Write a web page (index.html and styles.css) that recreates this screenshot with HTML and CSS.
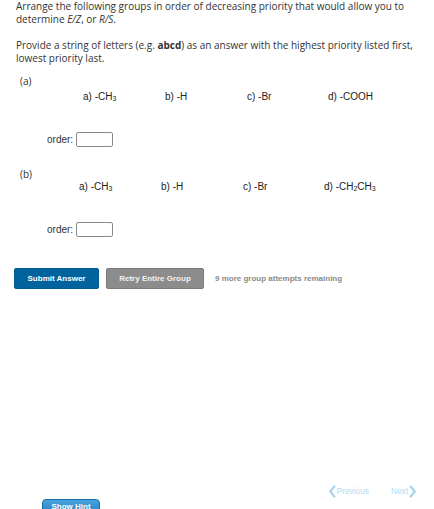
FILE: index.html
```html
<!DOCTYPE html>
<html>
<head>
<meta charset="utf-8">
<link rel="stylesheet" href="styles.css">
</head>
<body>
<div class="page">
  <p class="intro">Arrange the following groups in order of decreasing priority that would allow you to determine <i>E/Z</i>, or <i>R/S</i>.</p>
  <p class="intro second">Provide a string of letters (e.g. <b>abcd</b>) as an answer with the highest priority listed first, lowest priority last.</p>

  <div class="part part-a">
    <div class="part-label">(a)</div>
    <div class="choices choices-a">
      <span>a) -CH<sub>3</sub></span>
      <span>b) -H</span>
      <span>c) -Br</span>
      <span>d) -COOH</span>
    </div>
    <div class="order"><span>order:</span><span class="box"></span></div>
  </div>

  <div class="part part-b">
    <div class="part-label">(b)</div>
    <div class="choices choices-b">
      <span>a) -CH<sub>3</sub></span>
      <span>b) -H</span>
      <span>c) -Br</span>
      <span>d) -CH<sub>2</sub>CH<sub>3</sub></span>
    </div>
    <div class="order"><span>order:</span><span class="box"></span></div>
  </div>

  <div class="actions">
    <span class="btn btn-submit">Submit Answer</span>
    <span class="btn btn-retry">Retry Entire Group</span>
    <span class="attempts">9 more group attempts remaining</span>
  </div>

  <div class="nav">
    <span class="nav-link"><svg class="chev" width="7" height="13" viewBox="0 0 7 13"><path d="M6 0.8 L1.3 6.5 L6 12.2" fill="none" stroke="#a9d4ee" stroke-width="2.2"/></svg>Previous</span>
    <span class="nav-link next">Next<svg class="chev" width="7" height="13" viewBox="0 0 7 13"><path d="M1 0.8 L5.7 6.5 L1 12.2" fill="none" stroke="#a9d4ee" stroke-width="2.2"/></svg></span>
  </div>

  <div class="hint-row"><span class="hint">Show Hint</span></div>
</div>
</body>
</html>
```

FILE: styles.css
```css
html, body {
  margin: 0;
  padding: 0;
  height: 509px;
  overflow: hidden;
  background: #ffffff;
}

.page {
  padding: 0 12px 0 16px;
  font-family: "Open Sans", "Liberation Sans", sans-serif;
  font-size: 10px;
  line-height: 13px;
  color: #333333;
}

.intro {
  margin: 0;
}

.second {
  margin-top: 13px;
}

.part-label {
  margin-left: 4px;
  line-height: 13px;
}

.part-a {
  margin-top: 10px;
}

.part-b {
  margin-top: 21px;
}

.choices {
  display: grid;
  grid-template-columns: 82px 82px 81px 82px;
  font-family: "Liberation Sans", Arial, sans-serif;
  font-size: 10px;
  line-height: 12px;
  color: #222222;
}

.choices-a {
  margin-top: 3px;
  padding-left: 67px;
}

.choices-b {
  padding-left: 63px;
}

.choices sub {
  font-size: 7px;
  line-height: 0;
  vertical-align: -1px;
}

.order {
  display: flex;
  align-items: center;
  gap: 3px;
  margin-top: 29px;
  margin-left: 31px;
  height: 15px;
  font-family: "Liberation Sans", Arial, sans-serif;
  font-size: 10px;
  color: #333333;
}

.box {
  display: block;
  width: 35px;
  height: 13px;
  border: 1px solid #8a8a8a;
  border-radius: 2px;
  background: #ffffff;
}

.actions {
  display: flex;
  align-items: center;
  margin-top: 31px;
  margin-left: -2px;
  height: 21px;
}

.btn {
  display: flex;
  align-items: center;
  justify-content: center;
  box-sizing: border-box;
  height: 21px;
  border-radius: 2px;
  font-family: "Liberation Sans", Arial, sans-serif;
  font-weight: bold;
  font-size: 8px;
  color: #ffffff;
}

.btn-submit {
  width: 85px;
  background: #00639e;
  border: 1px solid #005a8f;
}

.btn-retry {
  width: 98px;
  margin-left: 7px;
  background: #8c8c8c;
  border: 1px solid #7a7a7a;
  color: #f2f2f2;
}

.attempts {
  margin-left: 11px;
  font-family: "Liberation Sans", Arial, sans-serif;
  font-weight: bold;
  font-size: 8px;
  color: #8a8a8a;
}

.nav {
  display: flex;
  justify-content: flex-end;
  gap: 22px;
  margin-top: 196px;
  padding-right: 6px;
  height: 13px;
  font-family: "Liberation Sans", Arial, sans-serif;
  font-size: 8.3px;
  line-height: 13px;
  color: #b3d9ef;
}

.nav-link {
  display: flex;
  align-items: center;
  gap: 1px;
}

.chev {
  display: block;
}

.hint-row {
  margin-top: 1px;
  padding-left: 26px;
}

.hint {
  display: inline-block;
  box-sizing: border-box;
  width: 58px;
  height: 18px;
  padding-top: 1px;
  border: 1px solid #1670a8;
  border-radius: 4px;
  background: linear-gradient(#4aa3dc, #1c7dbd);
  font-family: "Liberation Sans", Arial, sans-serif;
  font-weight: bold;
  font-size: 8px;
  line-height: 12px;
  text-align: center;
  color: #ffffff;
}
```
